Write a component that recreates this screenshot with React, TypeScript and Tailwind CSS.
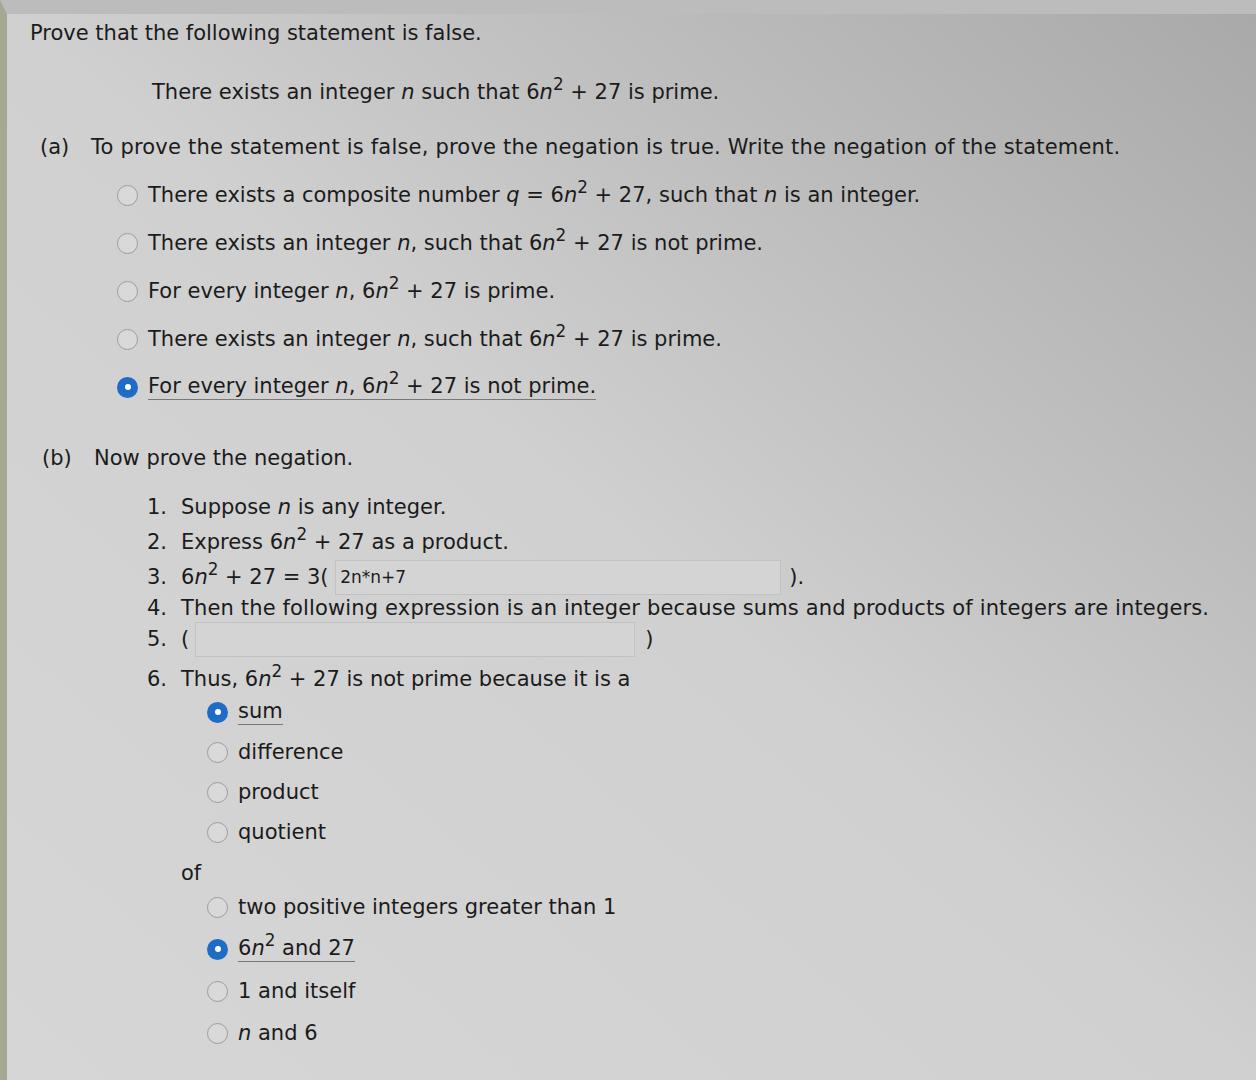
import React from 'react'

const N = () => <i>n</i>

const Expr = () => (
  <>
    6<N />
    <sup className="text-[0.8em] -top-[0.55em]">2</sup> + 27
  </>
)

function Radio({ checked = false }: { checked?: boolean }) {
  if (checked) {
    return (
      <span className="w-[21px] h-[21px] rounded-full bg-[#1e6cc6] flex items-center justify-center shrink-0">
        <span className="w-[6px] h-[6px] rounded-full bg-white" />
      </span>
    )
  }
  return <span className="w-[21px] h-[21px] rounded-full border border-[#9c9c9c] bg-[#d9d9d9] shrink-0" />
}

function Option({
  checked,
  children,
  h,
}: {
  checked?: boolean
  children: React.ReactNode
  h: string
}) {
  return (
    <div className={`flex items-center gap-[10px] ${h}`}>
      <Radio checked={checked} />
      {checked ? (
        <span className="border-b border-[#777] leading-[25px]">{children}</span>
      ) : (
        <span className="leading-[26px]">{children}</span>
      )}
    </div>
  )
}

const partA = [
  <>
    There exists a composite number <i>q</i> = <Expr />, such that <N /> is an integer.
  </>,
  <>
    There exists an integer <N />, such that <Expr /> is not prime.
  </>,
  <>
    For every integer <N />, <Expr /> is prime.
  </>,
  <>
    There exists an integer <N />, such that <Expr /> is prime.
  </>,
  <>
    For every integer <N />, <Expr /> is not prime.
  </>,
]

const kinds = ['sum', 'difference', 'product', 'quotient']

const ofWhat = [
  <>two positive integers greater than 1</>,
  <>
    6<N />
    <sup className="text-[0.8em] -top-[0.55em]">2</sup> and 27
  </>,
  <>1 and itself</>,
  <>
    <N /> and 6
  </>,
]

function Step({ num, children, h }: { num: string; children: React.ReactNode; h: string }) {
  return (
    <div className={`flex items-center ${h}`}>
      <span className="w-[34px] shrink-0">{num}</span>
      <div className="flex items-center whitespace-pre">{children}</div>
    </div>
  )
}

export default function App() {
  return (
    <div className="min-h-screen w-full bg-[#bdbdbb]">
      <div className="min-h-[1080px] border-t-[14px] border-t-[#bcbcbc] border-l-[7px] border-l-[#a5a892] bg-linear-to-bl from-[#a9a9a9] via-[#d0d0d0] to-[#d6d6d6] text-[#1b1b1b] text-[21px] font-['DejaVu_Sans',Verdana,sans-serif] pl-[23px] pt-[6px]">
        {/* Statement */}
        <p className="leading-[26px]">Prove that the following statement is false.</p>
        <p className="leading-[26px] mt-[33px] ml-[122px]">
          There exists an integer <N /> such that <Expr /> is prime.
        </p>

        {/* Part (a) */}
        <div className="flex mt-[29px] leading-[26px]">
          <span className="w-[51px] ml-[10px] shrink-0">(a)</span>
          <span className="tracking-[0.2px]">
            To prove the statement is false, prove the negation is true. Write the negation of the statement.
          </span>
        </div>
        <div className="ml-[87px] mt-[11px]">
          {partA.map((label, i) => (
            <Option key={i} checked={i === 4} h="h-[48px]">
              {label}
            </Option>
          ))}
        </div>

        {/* Part (b) */}
        <div className="flex mt-[34px] leading-[26px]">
          <span className="w-[52px] ml-[12px] shrink-0">(b)</span>
          <span>Now prove the negation.</span>
        </div>
        <div className="ml-[117px] mt-[19px]">
          <Step num="1." h="h-[35px]">
            <span>
              Suppose <N /> is any integer.
            </span>
          </Step>
          <Step num="2." h="h-[35px]">
            <span>
              Express <Expr /> as a product.
            </span>
          </Step>
          <Step num="3." h="h-[35px]">
            <span>
              <Expr /> = 3({' '}
            </span>
            <div className="w-[446px] h-[35px] border border-[#c2c2c2] bg-[#d4d4d4] flex items-center pl-[4px] text-[17px]">
              2n*n+7
            </div>
            <span className="ml-[8px]">).</span>
          </Step>
          <Step num="4." h="h-[27px]">
            <span className="tracking-[0.15px]">
              Then the following expression is an integer because sums and products of integers are integers.
            </span>
          </Step>
          <Step num="5." h="h-[35px]">
            <span className="mr-[6px]">(</span>
            <div className="w-[440px] h-[35px] border border-[#c2c2c2] bg-[#d4d4d4]" />
            <span className="ml-[10px]">)</span>
          </Step>
          <div className="flex mt-[9px] leading-[26px]">
            <span className="w-[34px] shrink-0">6.</span>
            <span>
              Thus, <Expr /> is not prime because it is a
            </span>
          </div>
          <div className="ml-[60px]">
            {kinds.map((k, i) => (
              <Option key={k} checked={i === 0} h="h-[40px]">
                {k}
              </Option>
            ))}
          </div>
          <p className="ml-[34px] mt-[8px] leading-[26px]">of</p>
          <div className="ml-[60px]">
            {ofWhat.map((label, i) => (
              <Option key={i} checked={i === 1} h="h-[42px]">
                {label}
              </Option>
            ))}
          </div>
        </div>
      </div>
    </div>
  )
}
